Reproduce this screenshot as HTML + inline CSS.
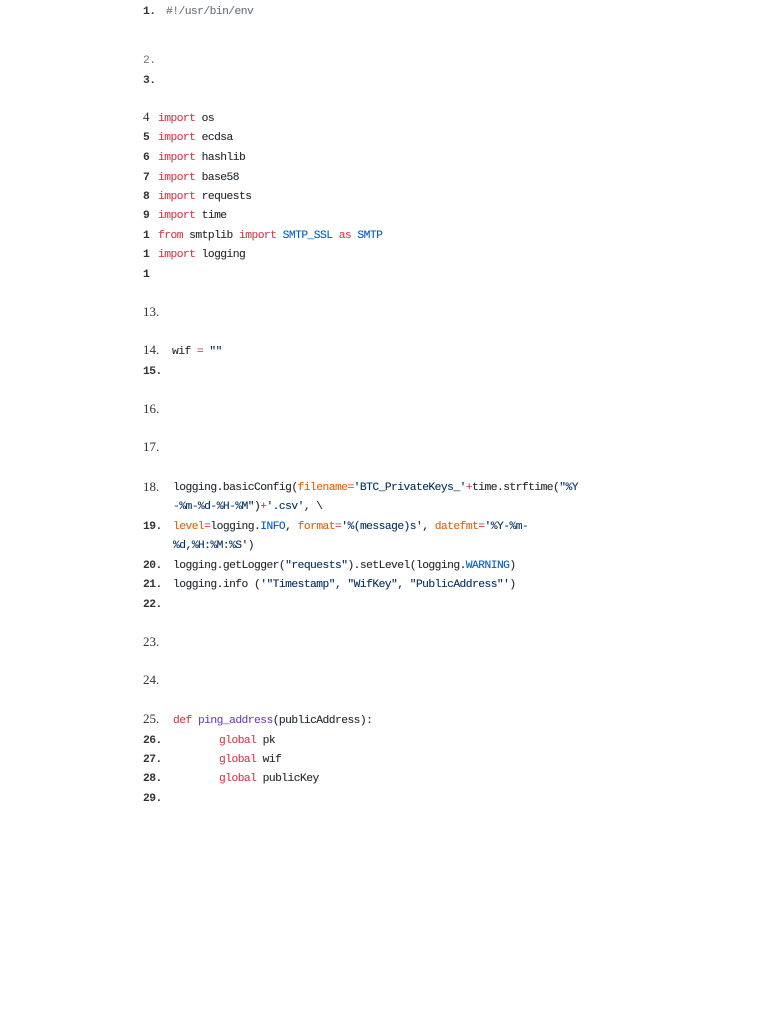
<!DOCTYPE html>
<html>
<head>
<meta charset="utf-8">
<style>
html,body{margin:0;padding:0;background:#fff;width:768px;height:1024px;overflow:hidden}
#p{position:relative;width:768px;height:1024px}
.l{position:absolute;margin-top:1px;white-space:pre;font:11.3px/14px "Liberation Mono",monospace;letter-spacing:-.55px;color:#24292e;-webkit-text-stroke:.1px currentColor;filter:blur(.3px)}
.n{position:absolute;margin-top:1px;left:143px;white-space:pre;font:bold 11.3px/14px "Liberation Mono",monospace;letter-spacing:-.55px;color:#333;filter:blur(.3px)}
.s{position:absolute;left:143px;white-space:pre;font:13px/16px "Liberation Serif",serif;color:#333;filter:blur(.2px)}
.k{color:#d73a49}.b{color:#005cc5}.o{color:#e36209}.t{color:#032f62}.u{color:#6f42c1}.g{color:#6a737d}
</style>
</head>
<body>
<div id="p">
<div class="n" style="top:4px">1.</div><div class="l g" style="left:166px;top:4px">#!/usr/bin/env</div>
<div class="n" style="top:53px;color:#6a737d;font-weight:normal">2.</div>
<div class="n" style="top:73px">3.</div>
<div class="s" style="top:109px">4</div><div class="l" style="left:158px;top:111px"><span class="k">import</span> os</div>
<div class="n" style="top:130px">5</div><div class="l" style="left:158px;top:130px"><span class="k">import</span> ecdsa</div>
<div class="n" style="top:150px">6</div><div class="l" style="left:158px;top:150px"><span class="k">import</span> hashlib</div>
<div class="n" style="top:170px">7</div><div class="l" style="left:158px;top:170px"><span class="k">import</span> base58</div>
<div class="n" style="top:189px">8</div><div class="l" style="left:158px;top:189px"><span class="k">import</span> requests</div>
<div class="n" style="top:208px">9</div><div class="l" style="left:158px;top:208px"><span class="k">import</span> time</div>
<div class="n" style="top:228px">1</div><div class="l" style="left:158px;top:228px"><span class="k">from</span> smtplib <span class="k">import</span> <span class="b">SMTP_SSL</span> <span class="k">as</span> <span class="b">SMTP</span></div>
<div class="n" style="top:247px">1</div><div class="l" style="left:158px;top:247px"><span class="k">import</span> logging</div>
<div class="n" style="top:267px">1</div>
<div class="s" style="top:304px">13.</div>
<div class="s" style="top:342px">14.</div><div class="l" style="left:172px;top:344px">wif <span class="k">=</span> <span class="t">""</span></div>
<div class="n" style="top:364px">15.</div>
<div class="s" style="top:401px">16.</div>
<div class="s" style="top:439px">17.</div>
<div class="s" style="top:479px">18.</div><div class="l" style="left:173px;top:480px">logging.basicConfig(<span class="o">filename</span><span class="k">=</span><span class="t">'BTC_PrivateKeys_'</span><span class="k">+</span>time.strftime(<span class="t">"%Y</span></div>
<div class="l" style="left:173px;top:499px"><span class="t">-%m-%d-%H-%M"</span>)<span class="k">+</span><span class="t">'.csv'</span>, \</div>
<div class="n" style="top:519px">19.</div><div class="l" style="left:173px;top:519px"><span class="o">level</span><span class="k">=</span>logging.<span class="b">INFO</span>, <span class="o">format</span><span class="k">=</span><span class="t">'%(message)s'</span>, <span class="o">datefmt</span><span class="k">=</span><span class="t">'%Y-%m-</span></div>
<div class="l" style="left:173px;top:538px"><span class="t">%d,%H:%M:%S'</span>)</div>
<div class="n" style="top:558px">20.</div><div class="l" style="left:173px;top:558px">logging.getLogger(<span class="t">"requests"</span>).setLevel(logging.<span class="b">WARNING</span>)</div>
<div class="n" style="top:577px">21.</div><div class="l" style="left:173px;top:577px">logging.info (<span class="t">'"Timestamp", "WifKey", "PublicAddress"'</span>)</div>
<div class="n" style="top:597px">22.</div>
<div class="s" style="top:634px">23.</div>
<div class="s" style="top:672px">24.</div>
<div class="s" style="top:711px">25.</div><div class="l" style="left:173px;top:713px"><span class="k">def</span> <span class="u">ping_address</span>(publicAddress):</div>
<div class="n" style="top:733px">26.</div><div class="l" style="left:219px;top:733px"><span class="k">global</span> pk</div>
<div class="n" style="top:752px">27.</div><div class="l" style="left:219px;top:752px"><span class="k">global</span> wif</div>
<div class="n" style="top:771px">28.</div><div class="l" style="left:219px;top:771px"><span class="k">global</span> publicKey</div>
<div class="n" style="top:791px">29.</div>
</div>
</body>
</html>
